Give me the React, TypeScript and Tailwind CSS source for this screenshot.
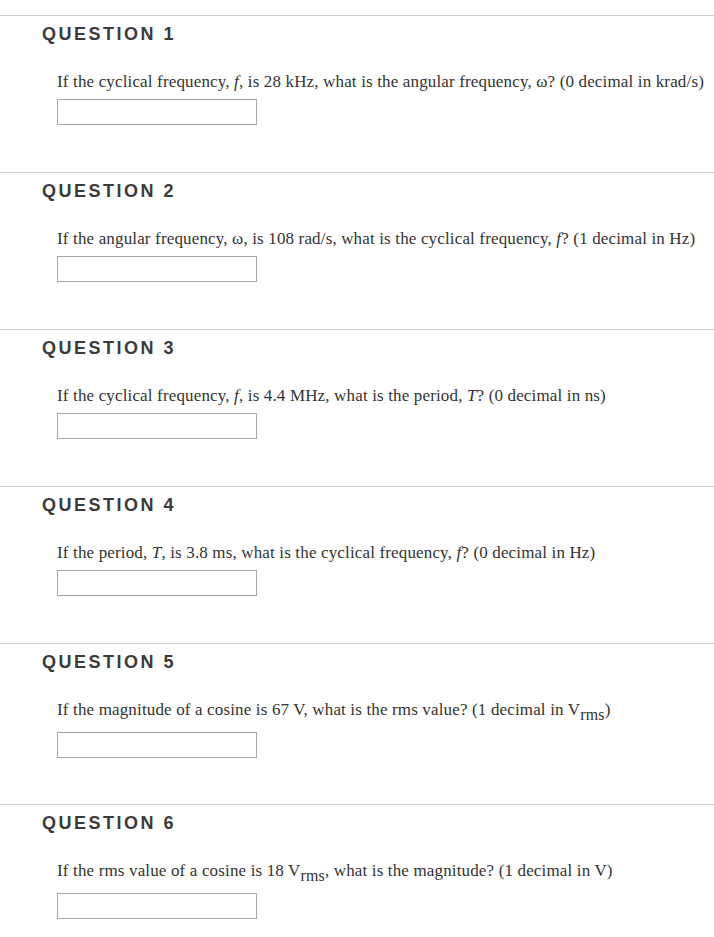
import React from "react";

type Q = { n: number; text: React.ReactNode; sub?: boolean };

const I = ({ children }: { children: React.ReactNode }) => <i>{children}</i>;
const Sub = ({ children }: { children: React.ReactNode }) => (
  <span className="relative top-[5px] text-[16px]">{children}</span>
);

const questions: Q[] = [
  {
    n: 1,
    text: (
      <>
        If the cyclical frequency, <I>f</I>, is 28 kHz, what is the angular frequency, ω? (0 decimal in krad/s)
      </>
    ),
  },
  {
    n: 2,
    text: (
      <>
        If the angular frequency, ω, is 108 rad/s, what is the cyclical frequency, <I>f</I>? (1 decimal in Hz)
      </>
    ),
  },
  {
    n: 3,
    text: (
      <>
        If the cyclical frequency, <I>f</I>, is 4.4 MHz, what is the period, <I>T</I>? (0 decimal in ns)
      </>
    ),
  },
  {
    n: 4,
    text: (
      <>
        If the period, <I>T</I>, is 3.8 ms, what is the cyclical frequency, <I>f</I>? (0 decimal in Hz)
      </>
    ),
  },
  {
    n: 5,
    sub: true,
    text: (
      <>
        If the magnitude of a cosine is 67 V, what is the rms value? (1 decimal in V<Sub>rms</Sub>)
      </>
    ),
  },
  {
    n: 6,
    sub: true,
    text: (
      <>
        If the rms value of a cosine is 18 V<Sub>rms</Sub>, what is the magnitude? (1 decimal in V)
      </>
    ),
  },
];

export default function App() {
  return (
    <div className="bg-white w-[714px] min-h-[937px] pt-[15px]">
      {questions.map((q) => (
        <div
          key={q.n}
          className={`border-t border-[#cccccc] pt-2 ${q.sub ? "pb-[46px]" : "pb-[47px]"}`}
        >
          <div
            className="pl-[42px] text-[18px] leading-[20px] font-bold tracking-[2.5px] text-[#3b3b3b]"
            style={{ fontFamily: '"Liberation Sans", Arial, sans-serif' }}
          >
            QUESTION {q.n}
          </div>
          <div className="pl-[57px] mt-7">
            <div
              className="text-[17px] leading-[20px] tracking-[0.15px] text-[#333333] whitespace-nowrap"
              style={{ fontFamily: '"Liberation Serif", "Times New Roman", serif' }}
            >
              {q.text}
            </div>
            <div className={q.sub ? "mt-[12px]" : "mt-[7px]"}>
              <input
                type="text"
                className="block w-[200px] h-[26px] border border-[#a6a6a6] bg-white outline-none"
              />
            </div>
          </div>
        </div>
      ))}
    </div>
  );
}
